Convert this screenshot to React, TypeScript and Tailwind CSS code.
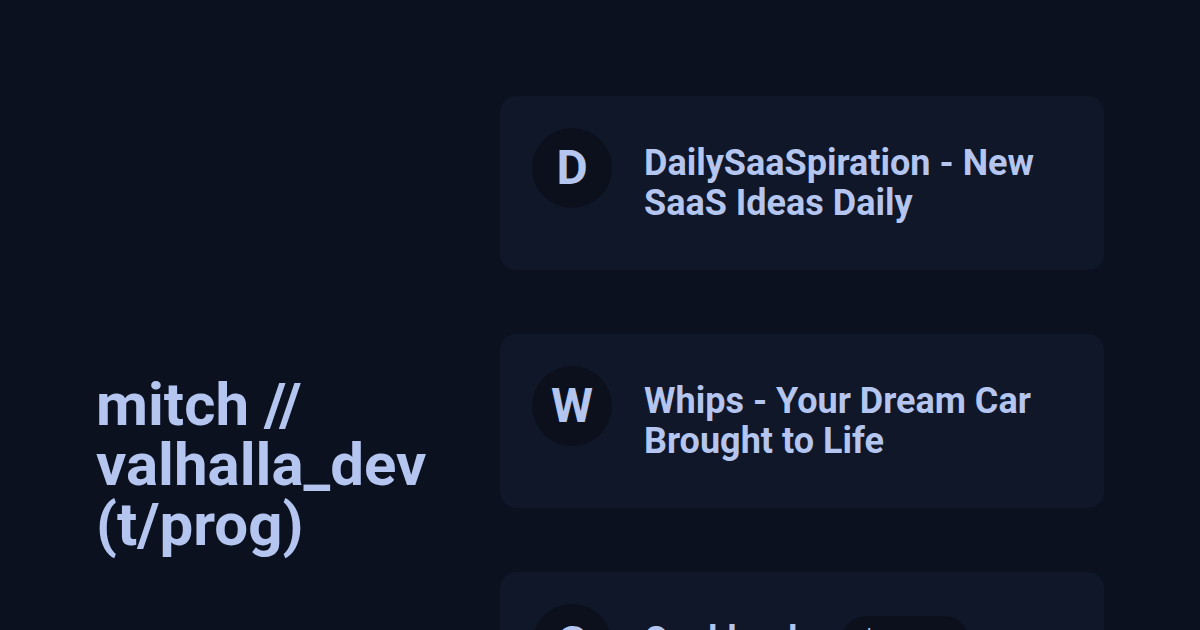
import React from "react"

type Item = {
  letter: string
  title: string
  badge?: string
  description?: string
}

const items: Item[] = [
  { letter: "D", title: "DailySaaSpiration - New SaaS Ideas Daily" },
  { letter: "W", title: "Whips - Your Dream Car Brought to Life" },
  {
    letter: "C",
    title: "Cookbooks",
    badge: "$12,000",
    description: "Turn any recipe link into a clean, shareable cookbook page in seconds.",
  },
]

function Card({ item }: { item: Item }) {
  return (
    <div className="flex gap-8 rounded-2xl bg-[#0f1729] p-8 min-h-[174px]">
      {/* Avatar */}
      <div className="flex h-20 w-20 shrink-0 items-center justify-center self-start rounded-full bg-[#0b101c]">
        <span className="text-5xl font-bold text-[#b4c5ef]">{item.letter}</span>
      </div>

      {/* Content */}
      {item.badge ? (
        <div className="flex flex-1 flex-col gap-4 self-start pt-3">
          <div className="flex items-center gap-4">
            <h3 className="text-4xl font-bold text-[#b4c5ef]">{item.title}</h3>
            <span className="flex h-12 items-center rounded-full bg-[#0b101c] px-5 text-2xl font-medium text-[#b4c5ef]">
              {item.badge}
            </span>
          </div>
          <p className="text-xl text-[#b4c5ef]/70">{item.description}</p>
          <div className="h-[49px]" />
        </div>
      ) : (
        <div className="flex-1 self-center">
          <h3 className="text-4xl font-bold text-[#b4c5ef]">{item.title}</h3>
        </div>
      )}
    </div>
  )
}

export default function App() {
  return (
    <div className="h-[630px] w-[1200px] overflow-hidden bg-[#0c1120] font-['Roboto',sans-serif]">
      <div className="flex items-center gap-8 px-24 py-24">
        {/* Header */}
        <div className="w-[372px] shrink-0">
          <h1 className="text-6xl font-bold leading-none text-[#b4c5ef]">
            mitch // valhalla_dev (t/prog)
          </h1>
        </div>

        {/* Projects */}
        <div className="flex w-[604px] flex-col gap-16">
          {items.map((item) => (
            <Card key={item.letter} item={item} />
          ))}
        </div>
      </div>
    </div>
  )
}
